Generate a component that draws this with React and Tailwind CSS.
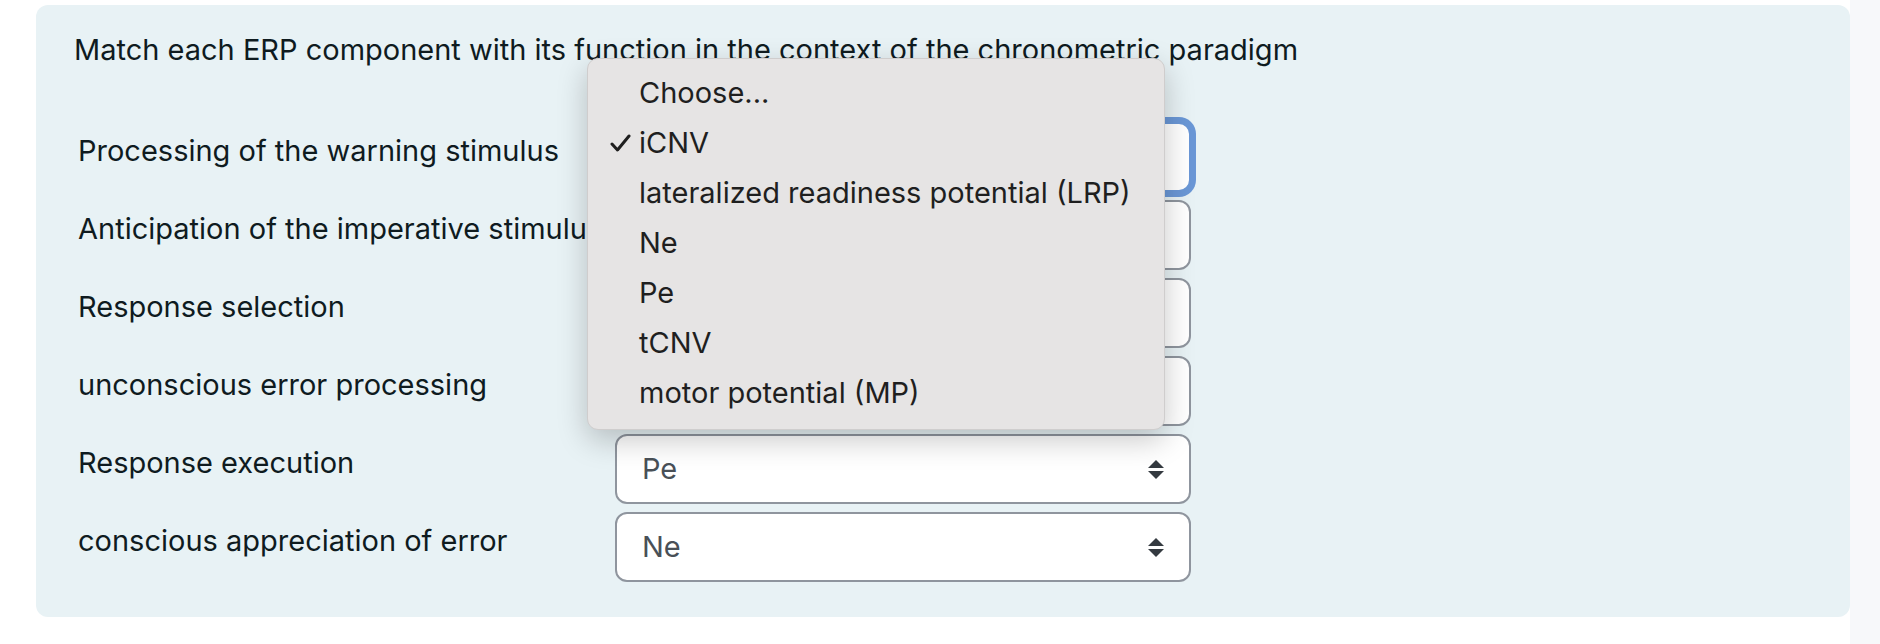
import React from "react";

const rows = [
  { label: "Processing of the warning stimulus", value: "iCNV", focused: true },
  { label: "Anticipation of the imperative stimulus", value: "tCNV" },
  { label: "Response selection", value: "lateralized readiness potential (LRP)" },
  { label: "unconscious error processing", value: "motor potential (MP)" },
  { label: "Response execution", value: "Pe" },
  { label: "conscious appreciation of error", value: "Ne" },
];

const options = [
  "Choose...",
  "iCNV",
  "lateralized readiness potential (LRP)",
  "Ne",
  "Pe",
  "tCNV",
  "motor potential (MP)",
];

// up/down caret used by the custom select
function SortArrows() {
  return (
    <svg width="16" height="19" viewBox="0 0 16 19" className="shrink-0">
      <polygon points="0,8 8,0 16,8" fill="#343a40" />
      <polygon points="0,11 16,11 8,19" fill="#343a40" />
    </svg>
  );
}

function Check() {
  return (
    <svg width="21" height="18" viewBox="0 0 21 18">
      <path d="M2 10 L7.5 16 L19 2" fill="none" stroke="#1f1f1f" strokeWidth="3" strokeLinecap="round" strokeLinejoin="round" />
    </svg>
  );
}

function Select({ value, focused }) {
  return (
    <div
      className={`w-[576px] h-[70px] rounded-[12px] bg-white flex items-center justify-between pl-[25px] pr-[25px] border-2 ${
        focused
          ? "border-[#6a97d6] shadow-[0_0_0_5px_#6a97d6]"
          : "border-[#8f959e]"
      }`}
    >
      <span className="text-[29px] text-[#495057] truncate">{value}</span>
      <SortArrows />
    </div>
  );
}

export default function App() {
  return (
    <div className="flex w-[1880px] h-[644px] bg-white font-['Inter','Noto_Sans',sans-serif]">
      <div className="flex-1 pl-[36px] pt-[5px]">
        <div className="relative w-[1814px] h-[612px] rounded-[12px] bg-[#e8f2f5] pt-[27px] pl-[38px] text-[#0f1b1f]">
          <p className="text-[29px] leading-[36px] whitespace-nowrap">
            Match each ERP component with its function in the context of the chronometric paradigm
          </p>

          <div className="mt-[54px] pl-[4px] flex flex-col gap-[8px]">
            {rows.map((row) => (
              <div key={row.label} className="flex items-center h-[70px]">
                <div className="w-[537px] text-[29px] leading-[36px] mb-[12px] whitespace-nowrap">
                  {row.label}
                </div>
                <Select value={row.value} focused={row.focused} />
              </div>
            ))}
          </div>

          {/* native dropdown menu open over the first select */}
          <div className="absolute left-[551px] top-[53px] w-[578px] h-[372px] rounded-[11px] bg-[#e6e4e4] border border-[#cfcdcd] shadow-[0_10px_30px_rgba(0,0,0,0.22)] pt-[9px] text-[#1f1f1f]">
            {options.map((opt) => (
              <div key={opt} className="flex items-center h-[50px]">
                <div className="w-[51px] flex justify-end pr-[8px]">
                  {opt === "iCNV" && <Check />}
                </div>
                <span className="text-[29px] leading-[36px]">{opt}</span>
              </div>
            ))}
          </div>
        </div>
      </div>
      <div className="w-[30px] h-[644px] bg-[#f7f8fa]" />
    </div>
  );
}
